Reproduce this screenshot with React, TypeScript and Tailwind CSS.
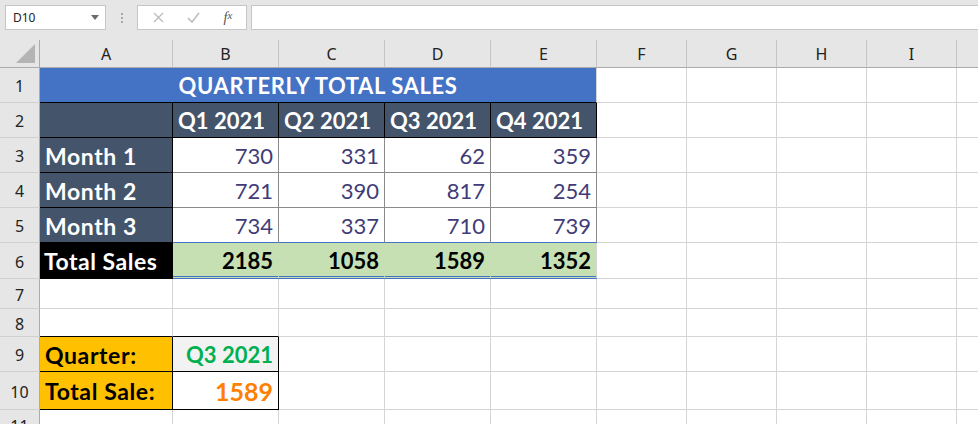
// ─── Spreadsheet: Quarterly Total Sales ───────────────────
const COLS = ["A", "B", "C", "D", "E", "F", "G", "H", "I", ""]

const months = [
  { label: "Month 1", values: [730, 331, 62, 359] },
  { label: "Month 2", values: [721, 390, 817, 254] },
  { label: "Month 3", values: [734, 337, 710, 739] },
]

const totals = [2185, 1058, 1589, 1352]

const GRID = "border-r border-b border-[#d4d4d4]"

function RowHead({ n }: { n: number }) {
  return (
    <div className="flex items-center justify-center border-r border-b border-r-[#ababab] border-b-[#d0d0d0] bg-[#e6e6e6] pt-[2px] font-['Noto_Sans',sans-serif] text-[16px] text-[#222]">
      {n}
    </div>
  )
}

function Blank({ className = "" }: { className?: string }) {
  return <div className={`${GRID} ${className}`} />
}

function Toolbar() {
  return (
    <div className="flex h-[40px] items-start bg-[#e6e6e6] pl-[5px] pt-[5px]">
      <div className="flex h-[25px] w-[101px] items-center justify-between border border-[#c6c6c6] bg-white pl-[7px] pr-[6px] font-['Noto_Sans',sans-serif] text-[12px] text-[#222]">
        <span>D10</span>
        <svg width="8" height="5" viewBox="0 0 8 5" aria-hidden="true">
          <path d="M0 0h8L4 5z" fill="#6b6b6b" />
        </svg>
      </div>
      <div className="flex h-[25px] w-[31px] flex-col items-center justify-center gap-[2px]">
        <span className="h-[2px] w-[2px] bg-[#a8a8a8]" />
        <span className="h-[2px] w-[2px] bg-[#a8a8a8]" />
        <span className="h-[2px] w-[2px] bg-[#a8a8a8]" />
      </div>
      <div className="flex h-[25px] w-[110px] items-center border border-[#c6c6c6] bg-white">
        <div className="flex w-[38px] justify-center pl-[2px]">
          <svg width="11" height="11" viewBox="0 0 11 11" aria-hidden="true">
            <path d="M1 1l9 9M10 1l-9 9" stroke="#bdbdbd" strokeWidth="1.4" />
          </svg>
        </div>
        <div className="flex w-[34px] justify-center">
          <svg width="13" height="11" viewBox="0 0 13 11" aria-hidden="true">
            <path d="M1 6l4 4 7-9" stroke="#bdbdbd" strokeWidth="1.6" fill="none" />
          </svg>
        </div>
        <div className="flex w-[36px] justify-center font-['Liberation_Serif',serif] text-[14px] italic text-[#555]">
          f<span className="text-[11px]">x</span>
        </div>
      </div>
      <div className="ml-[4px] h-[25px] flex-1 border border-r-0 border-[#c6c6c6] bg-white" />
    </div>
  )
}

export default function App() {
  return (
    <div className="h-[424px] w-[978px] overflow-hidden bg-white">
      <Toolbar />
      <div className="grid grid-cols-[40px_133px_106px_106px_106px_106px_90px_90px_90px_90px_90px] grid-rows-[28px_35px_35px_35px_35px_35px_36px_30px_28px_35px_38px_30px] font-['Lato',sans-serif] text-[22px] leading-none">
        {/* column headers */}
        <div className="relative border-r border-b border-r-[#ababab] border-b-[#ababab] bg-[#e6e6e6]">
          <div className="absolute bottom-[4px] right-[4px] h-0 w-0 border-b-[19px] border-l-[19px] border-b-[#b4b4b4] border-l-transparent" />
        </div>
        {COLS.map((c, i) => (
          <div
            key={i}
            className="flex items-center justify-center border-r border-b border-r-[#c4c4c4] border-b-[#ababab] bg-[#e6e6e6] pt-[1px] font-['Noto_Sans',sans-serif] text-[16px] text-[#222]"
          >
            {c}
          </div>
        ))}

        {/* row 1 */}
        <RowHead n={1} />
        <div className="col-span-5 flex items-center justify-center border-r border-b border-r-[#d4d4d4] border-b-black bg-[#4472c4] pt-[1px] text-[22px] font-bold tracking-[0.6px] text-white">
          QUARTERLY TOTAL SALES
        </div>
        <Blank />
        <Blank />
        <Blank />
        <Blank />
        <Blank />

        {/* row 2 */}
        <RowHead n={2} />
        <div className="border-r border-b border-black bg-[#44546a]" />
        {["Q1 2021", "Q2 2021", "Q3 2021", "Q4 2021"].map((q) => (
          <div
            key={q}
            className="flex items-center border-r border-b border-black bg-[#44546a] pl-[5px] pt-[2px] font-bold text-white"
          >
            {q}
          </div>
        ))}
        <Blank />
        <Blank />
        <Blank />
        <Blank />
        <Blank />

        {/* rows 3-5 */}
        {months.map((m, r) => (
          <div key={m.label} className="contents">
            <RowHead n={r + 3} />
            <div className="flex items-center border-r border-b border-black bg-[#44546a] pl-[5px] pt-[2px] text-[23px] font-bold tracking-[0.6px] text-white">
              {m.label}
            </div>
            {m.values.map((v, i) => (
              <div
                key={i}
                className={`flex items-center justify-end border-r border-b border-r-[#8a8a8a] pr-[5px] pt-[2px] text-[#3f3c78] ${
                  r === 2 ? "border-b-[#4472c4]" : "border-b-[#8a8a8a]"
                }`}
              >
                {v}
              </div>
            ))}
            <Blank />
            <Blank />
            <Blank />
            <Blank />
            <Blank />
          </div>
        ))}

        {/* row 6 */}
        <RowHead n={6} />
        <div className="flex items-center border-r border-b border-black bg-black pl-[4px] pt-[1px] text-[23px] font-bold tracking-[0.5px] text-white">
          Total Sales
        </div>
        {totals.map((t, i) => (
          <div
            key={i}
            className={`flex items-center justify-end border-r border-b-[3px] border-double border-b-[#4472c4] bg-[#c6e0b4] pr-[5px] pt-[3px] font-bold text-black ${
              i === 3 ? "border-r-[#d4d4d4]" : "border-r-[#c6e0b4]"
            }`}
          >
            {t}
          </div>
        ))}
        <Blank />
        <Blank />
        <Blank />
        <Blank />
        <Blank />

        {/* row 7 */}
        <RowHead n={7} />
        {COLS.map((_, i) => (
          <Blank key={i} />
        ))}

        {/* row 8 */}
        <RowHead n={8} />
        <Blank className="border-b-black" />
        <Blank className="border-b-black" />
        {COLS.slice(2).map((_, i) => (
          <Blank key={i} />
        ))}

        {/* row 9 */}
        <RowHead n={9} />
        <div className="flex items-center border-r border-b border-black bg-[#ffc000] pl-[5px] pt-[2px] text-[23px] font-bold tracking-[0.6px] text-black">
          Quarter:
        </div>
        <div className="flex items-center justify-end border-r border-b border-black bg-[#f2f2f2] pr-[5px] pt-[2px] font-bold text-[#00b050]">
          Q3 2021
        </div>
        {COLS.slice(2).map((_, i) => (
          <Blank key={i} />
        ))}

        {/* row 10 */}
        <RowHead n={10} />
        <div className="flex items-center border-r border-b border-black bg-[#ffc000] pl-[5px] pt-[2px] text-[23px] font-bold tracking-[0.6px] text-black">
          Total Sale:
        </div>
        <div className="flex items-center justify-end border-r border-b border-black pr-[5px] pt-[2px] text-[25px] font-bold text-[#ff7f00]">
          1589
        </div>
        {COLS.slice(2).map((_, i) => (
          <Blank key={i} />
        ))}

        {/* row 11 */}
        <RowHead n={11} />
        {COLS.map((_, i) => (
          <Blank key={i} />
        ))}
      </div>
    </div>
  )
}
